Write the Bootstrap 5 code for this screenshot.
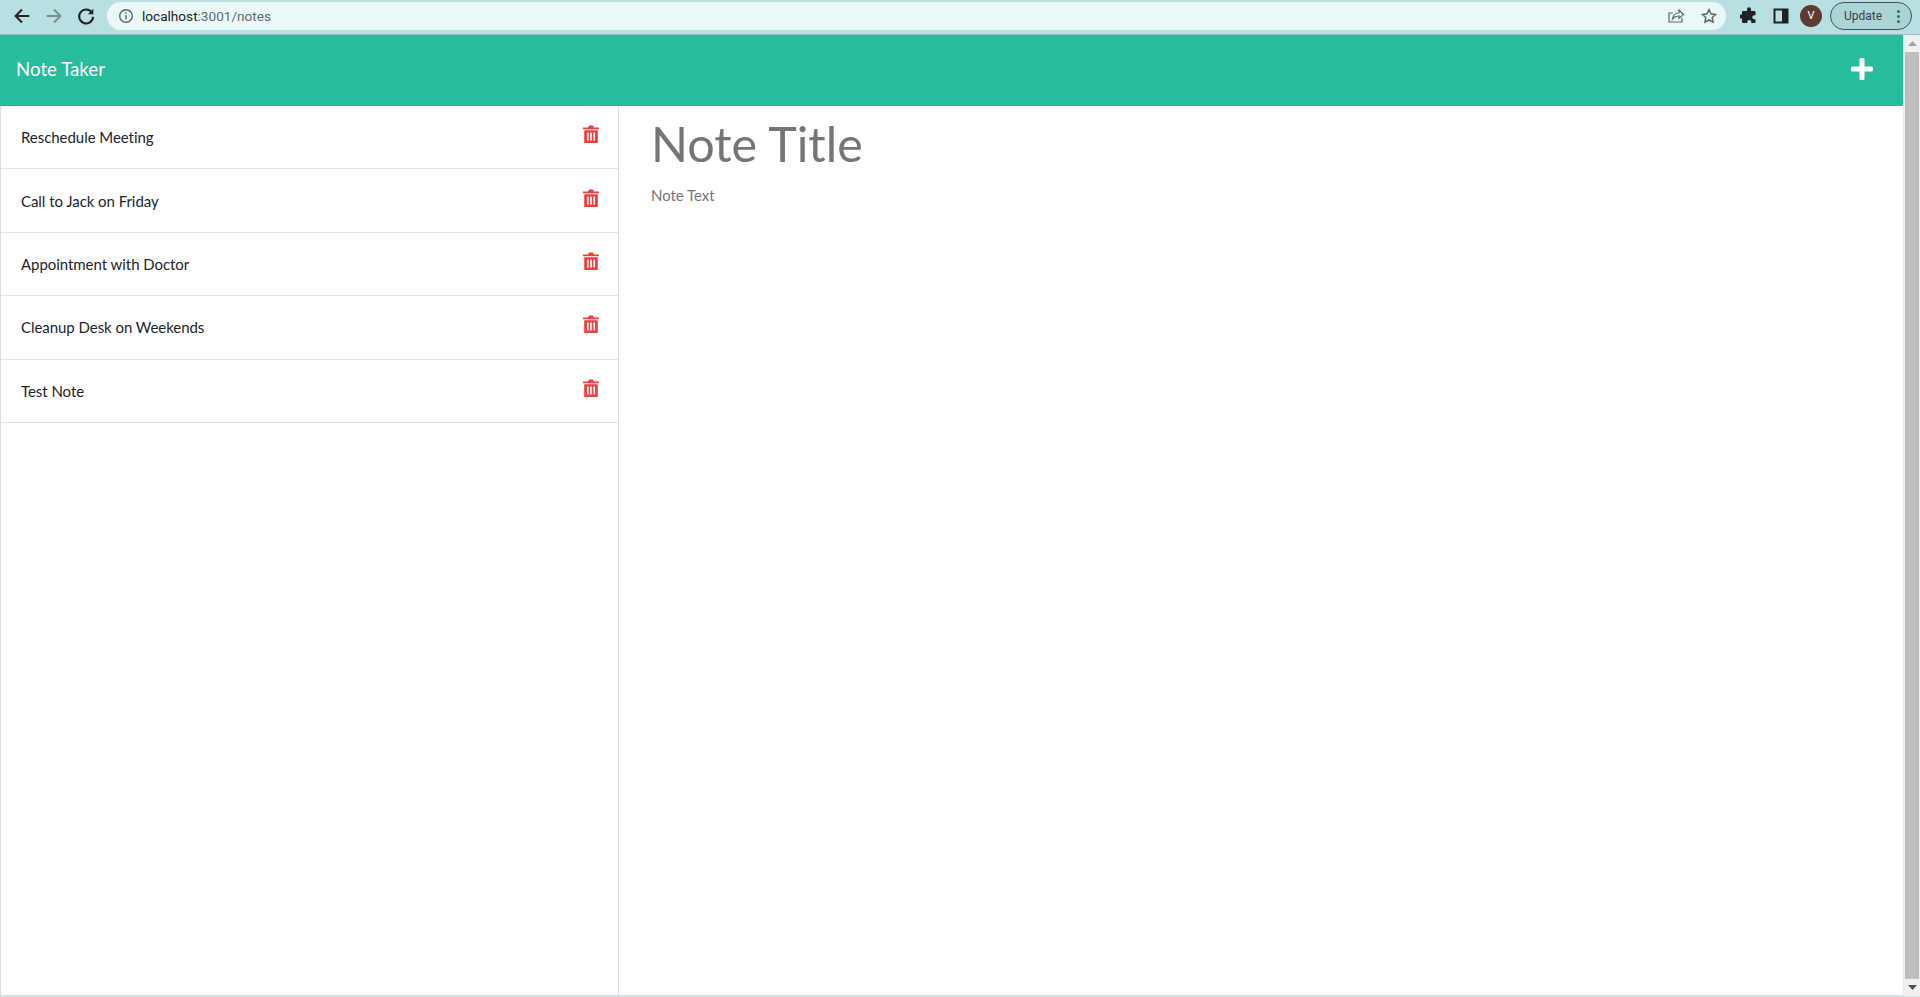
<!DOCTYPE html>
<html lang="en">
<head>
<meta charset="utf-8">
<title>Note Taker</title>
<link href="https://cdn.jsdelivr.net/npm/bootstrap@5.3.0/dist/css/bootstrap.min.css" rel="stylesheet">
<style>
html,body{height:997px;overflow:hidden;}
body{font-family:"Lato","Liberation Sans",sans-serif;font-size:15px;color:#212529;background:#fff;}
.chrome-bar{height:35px;background:#b8e0e3;border-bottom:1px solid #9fb9bd;padding:0 8px 2px 11px;flex:none;}
.nav-glyph{width:22px;height:22px;flex:none;}
.nav-glyphs{gap:10px;}
.url-pill{height:28px;background:#ebf8f8;border-radius:14px;margin-left:10px;padding:0 8px 0 11px;font-family:"Roboto","Liberation Sans",sans-serif;font-size:13.6px;color:#5f6b6d;}
.url-host{color:#202124;}
.url-text{margin-left:0;}
.share-glyph{margin-right:15px;margin-left:auto;}
.tool-group{margin-left:14px;}
.tool-glyph{width:18px;height:18px;flex:none;}
.panel-glyph{margin-left:14px;}
.avatar-dot{width:22px;height:22px;border-radius:50%;background:#5d3a32;color:#fff;font-family:"Roboto",sans-serif;font-size:11px;margin-left:10px;}
.update-pill{width:82px;height:28px;border:1px solid #3d4f52;border-radius:14px;background:#acd4d7;font-family:"Roboto",sans-serif;font-size:12px;color:#3c4043;padding:0 11px 0 13px;margin-left:8px;}
.update-dots i{display:block;width:3px;height:3px;border-radius:50%;background:#188038;margin:2px 0;}
.stage{min-height:0;}
.teal-nav{height:71px;background:#26bc9c;padding:0 30px 2px 16px;flex:none;}
.brand-text{font-size:18.7px;color:#fff;}
.plus-btn{width:22px;height:22px;margin-bottom:1px;}
.sheet{min-height:0;border-bottom:1px solid #dcdcdc;}
.note-side{width:619px;flex:none;border-left:1px solid #dcdcdc;border-right:1px solid #dcdcdc;}
.note-row{height:63.4px;padding:1px 19px 0 20px;border-bottom:1px solid #dee2e6;}
.note-row span{line-height:1;letter-spacing:-.05px;}
.bin-glyph{width:16px;height:18px;flex:none;margin-top:-7px;}
.editor-pane{padding:8px 0 0 32px;}
.title-ph{font-size:48.5px;line-height:1.2;color:#757575;font-weight:400;margin:0 0 12px;}
.text-ph{font-size:15px;line-height:1.5;color:#757575;margin:0;letter-spacing:-.05px;}
.scroll-rail{width:17px;flex:none;background:#f1f1f1;border-left:1px solid #e8e8e8;}
.rail-arrow{height:17px;}
.rail-thumb{background:#bebebe;margin:0 1px 0 1px;}
.base-strip{height:1px;background:#cfe6ea;flex:none;}
</style>
</head>
<body class="d-flex flex-column">
<div class="chrome-bar d-flex align-items-center">
  <div class="nav-glyphs d-flex align-items-center">
    <svg class="nav-glyph" viewBox="0 0 24 24" fill="none" stroke="#202124" stroke-width="2.2"><path d="M20 12H5M12 5l-7 7 7 7"/></svg>
    <svg class="nav-glyph" viewBox="0 0 24 24" fill="none" stroke="#7d8c8f" stroke-width="2.2"><path d="M4 12h15M12 5l7 7-7 7"/></svg>
    <svg class="nav-glyph" viewBox="0 0 24 24" fill="none" stroke="#202124" stroke-width="2.2"><path d="M18.500 8.500A7.600 7.600 0 1 0 19.700 13"/><path d="M20 4v6h-6z" fill="#202124" stroke="none"/></svg>
  </div>
  <div class="url-pill flex-grow-1 d-flex align-items-center">
    <svg width="16" height="16" viewBox="0 0 16 16" fill="none" stroke="#5f6368" stroke-width="1.400" class="me-2"><circle cx="8" cy="8" r="6.300"/><path d="M8 7v4.400M8 4.300v1.500"/></svg>
    <span class="url-text"><span class="url-host">localhost</span>:3001/notes</span>
    <svg class="share-glyph" width="18" height="18" viewBox="0 0 18 18" fill="none" stroke="#5f6368" stroke-width="1.200"><path d="M15 11v4H2V6h4"/><path d="M5.500 12c.5-4 3-6 6.500-6V3l4.500 4.500L12 11.500V9c-3 0-5 1-6.500 3z"/></svg>
    <svg width="18" height="18" viewBox="0 0 24 24" fill="none" stroke="#5f6368" stroke-width="2"><path d="M12 3.500l2.700 5.600 6 .8-4.400 4.200 1.100 6.100L12 17.300l-5.400 2.900 1.100-6.100-4.400-4.200 6-.8z"/></svg>
  </div>
  <div class="tool-group d-flex align-items-center">
    <svg class="tool-glyph" viewBox="0 0 18 18" fill="#202124"><path d="M7 2.200a2 2 0 0 1 4 0V4h3.500a1 1 0 0 1 1 1v3.200h-1.200a2 2 0 0 0 0 4h1.200V15a1 1 0 0 1-1 1h-3.200v-1a2 2 0 0 0-4 0v1H3a1 1 0 0 1-1-1v-3.500H1a2 2 0 0 1 0-4h1V5a1 1 0 0 1 1-1h4z"/></svg>
    <svg class="tool-glyph panel-glyph" viewBox="0 0 18 18" fill="none" stroke="#202124" stroke-width="2"><rect x="2.500" y="2.500" width="13" height="13"/><rect x="10" y="3" width="5" height="12" fill="#202124" stroke="none"/></svg>
    <div class="avatar-dot d-flex align-items-center justify-content-center">V</div>
    <div class="update-pill d-flex align-items-center justify-content-between"><span>Update</span><span class="update-dots"><i></i><i></i><i></i></span></div>
  </div>
</div>
<div class="stage flex-grow-1 d-flex">
  <div class="flex-grow-1 d-flex flex-column" style="min-width:0">
    <nav class="teal-nav d-flex align-items-center justify-content-between">
      <span class="brand-text">Note Taker</span>
      <svg class="plus-btn" viewBox="0 0 22 22" fill="#fff"><rect x="8.500" y="0" width="5" height="22" rx="1.500"/><rect x="0" y="8.500" width="22" height="5" rx="1.500"/></svg>
    </nav>
    <div class="sheet flex-grow-1 d-flex">
      <div class="note-side">
        <div class="note-row d-flex align-items-center justify-content-between"><span>Reschedule Meeting</span><svg class="bin-glyph" viewBox="0 0 16 18"><use href="#bin"/></svg></div>
        <div class="note-row d-flex align-items-center justify-content-between"><span>Call to Jack on Friday</span><svg class="bin-glyph" viewBox="0 0 16 18"><use href="#bin"/></svg></div>
        <div class="note-row d-flex align-items-center justify-content-between"><span>Appointment with Doctor</span><svg class="bin-glyph" viewBox="0 0 16 18"><use href="#bin"/></svg></div>
        <div class="note-row d-flex align-items-center justify-content-between"><span>Cleanup Desk on Weekends</span><svg class="bin-glyph" viewBox="0 0 16 18"><use href="#bin"/></svg></div>
        <div class="note-row d-flex align-items-center justify-content-between"><span>Test Note</span><svg class="bin-glyph" viewBox="0 0 16 18"><use href="#bin"/></svg></div>
      </div>
      <div class="editor-pane flex-grow-1">
        <h1 class="title-ph">Note Title</h1>
        <p class="text-ph">Note Text</p>
      </div>
    </div>
  </div>
  <div class="scroll-rail d-flex flex-column">
    <div class="rail-arrow d-flex align-items-center justify-content-center"><svg width="9" height="5" viewBox="0 0 9 5"><path d="M4.500 0L9 5H0z" fill="#a3a3a3"/></svg></div>
    <div class="rail-thumb flex-grow-1"></div>
    <div class="rail-arrow d-flex align-items-center justify-content-center"><svg width="9" height="5" viewBox="0 0 9 5"><path d="M0 0h9L4.500 5z" fill="#505050"/></svg></div>
  </div>
</div>
<div class="base-strip"></div>
<svg width="0" height="0" class="d-block" style="height:0"><defs><g id="bin" fill="#e8413f"><path d="M0 2.500h5L6 .5h4l1 2h5V4.300H0z"/><path fill-rule="evenodd" d="M1.200 5.200h13.600V18H1.200zM4 7.500v8h1.600v-8zM7.200 7.500v8h1.600v-8zM10.400 7.500v8H12v-8z"/></g></defs></svg>
</body>
</html>
